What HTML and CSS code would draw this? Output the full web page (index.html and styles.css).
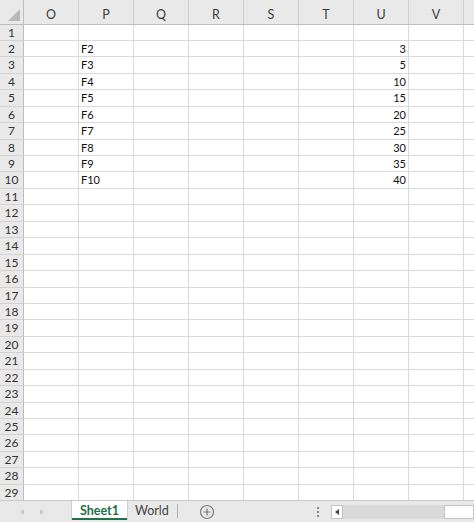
FILE: index.html
```html
<!DOCTYPE html>
<html>
<head>
<meta charset="utf-8">
<link rel="stylesheet" href="styles.css">
</head>
<body>
<div class="app">
  <div class="grid">
    <div class="row head">
      <div class="corner"><span class="tri"></span></div>
      <div class="ch">O</div><div class="ch">P</div><div class="ch">Q</div><div class="ch">R</div><div class="ch">S</div><div class="ch">T</div><div class="ch">U</div><div class="ch">V</div><div class="ch"></div>
    </div>
    <div class="row"><div class="rh">1</div><div class="c"></div><div class="c"></div><div class="c"></div><div class="c"></div><div class="c"></div><div class="c"></div><div class="c"></div><div class="c"></div><div class="c"></div></div>
    <div class="row"><div class="rh">2</div><div class="c"></div><div class="c">F2</div><div class="c"></div><div class="c"></div><div class="c"></div><div class="c"></div><div class="c n">3</div><div class="c"></div><div class="c"></div></div>
    <div class="row"><div class="rh">3</div><div class="c"></div><div class="c">F3</div><div class="c"></div><div class="c"></div><div class="c"></div><div class="c"></div><div class="c n">5</div><div class="c"></div><div class="c"></div></div>
    <div class="row"><div class="rh">4</div><div class="c"></div><div class="c">F4</div><div class="c"></div><div class="c"></div><div class="c"></div><div class="c"></div><div class="c n">10</div><div class="c"></div><div class="c"></div></div>
    <div class="row"><div class="rh">5</div><div class="c"></div><div class="c">F5</div><div class="c"></div><div class="c"></div><div class="c"></div><div class="c"></div><div class="c n">15</div><div class="c"></div><div class="c"></div></div>
    <div class="row"><div class="rh">6</div><div class="c"></div><div class="c">F6</div><div class="c"></div><div class="c"></div><div class="c"></div><div class="c"></div><div class="c n">20</div><div class="c"></div><div class="c"></div></div>
    <div class="row"><div class="rh">7</div><div class="c"></div><div class="c">F7</div><div class="c"></div><div class="c"></div><div class="c"></div><div class="c"></div><div class="c n">25</div><div class="c"></div><div class="c"></div></div>
    <div class="row"><div class="rh">8</div><div class="c"></div><div class="c">F8</div><div class="c"></div><div class="c"></div><div class="c"></div><div class="c"></div><div class="c n">30</div><div class="c"></div><div class="c"></div></div>
    <div class="row"><div class="rh">9</div><div class="c"></div><div class="c">F9</div><div class="c"></div><div class="c"></div><div class="c"></div><div class="c"></div><div class="c n">35</div><div class="c"></div><div class="c"></div></div>
    <div class="row"><div class="rh">10</div><div class="c"></div><div class="c">F10</div><div class="c"></div><div class="c"></div><div class="c"></div><div class="c"></div><div class="c n">40</div><div class="c"></div><div class="c"></div></div>
    <div class="row"><div class="rh">11</div><div class="c"></div><div class="c"></div><div class="c"></div><div class="c"></div><div class="c"></div><div class="c"></div><div class="c"></div><div class="c"></div><div class="c"></div></div>
    <div class="row"><div class="rh">12</div><div class="c"></div><div class="c"></div><div class="c"></div><div class="c"></div><div class="c"></div><div class="c"></div><div class="c"></div><div class="c"></div><div class="c"></div></div>
    <div class="row"><div class="rh">13</div><div class="c"></div><div class="c"></div><div class="c"></div><div class="c"></div><div class="c"></div><div class="c"></div><div class="c"></div><div class="c"></div><div class="c"></div></div>
    <div class="row"><div class="rh">14</div><div class="c"></div><div class="c"></div><div class="c"></div><div class="c"></div><div class="c"></div><div class="c"></div><div class="c"></div><div class="c"></div><div class="c"></div></div>
    <div class="row"><div class="rh">15</div><div class="c"></div><div class="c"></div><div class="c"></div><div class="c"></div><div class="c"></div><div class="c"></div><div class="c"></div><div class="c"></div><div class="c"></div></div>
    <div class="row"><div class="rh">16</div><div class="c"></div><div class="c"></div><div class="c"></div><div class="c"></div><div class="c"></div><div class="c"></div><div class="c"></div><div class="c"></div><div class="c"></div></div>
    <div class="row"><div class="rh">17</div><div class="c"></div><div class="c"></div><div class="c"></div><div class="c"></div><div class="c"></div><div class="c"></div><div class="c"></div><div class="c"></div><div class="c"></div></div>
    <div class="row"><div class="rh">18</div><div class="c"></div><div class="c"></div><div class="c"></div><div class="c"></div><div class="c"></div><div class="c"></div><div class="c"></div><div class="c"></div><div class="c"></div></div>
    <div class="row"><div class="rh">19</div><div class="c"></div><div class="c"></div><div class="c"></div><div class="c"></div><div class="c"></div><div class="c"></div><div class="c"></div><div class="c"></div><div class="c"></div></div>
    <div class="row"><div class="rh">20</div><div class="c"></div><div class="c"></div><div class="c"></div><div class="c"></div><div class="c"></div><div class="c"></div><div class="c"></div><div class="c"></div><div class="c"></div></div>
    <div class="row"><div class="rh">21</div><div class="c"></div><div class="c"></div><div class="c"></div><div class="c"></div><div class="c"></div><div class="c"></div><div class="c"></div><div class="c"></div><div class="c"></div></div>
    <div class="row"><div class="rh">22</div><div class="c"></div><div class="c"></div><div class="c"></div><div class="c"></div><div class="c"></div><div class="c"></div><div class="c"></div><div class="c"></div><div class="c"></div></div>
    <div class="row"><div class="rh">23</div><div class="c"></div><div class="c"></div><div class="c"></div><div class="c"></div><div class="c"></div><div class="c"></div><div class="c"></div><div class="c"></div><div class="c"></div></div>
    <div class="row"><div class="rh">24</div><div class="c"></div><div class="c"></div><div class="c"></div><div class="c"></div><div class="c"></div><div class="c"></div><div class="c"></div><div class="c"></div><div class="c"></div></div>
    <div class="row"><div class="rh">25</div><div class="c"></div><div class="c"></div><div class="c"></div><div class="c"></div><div class="c"></div><div class="c"></div><div class="c"></div><div class="c"></div><div class="c"></div></div>
    <div class="row"><div class="rh">26</div><div class="c"></div><div class="c"></div><div class="c"></div><div class="c"></div><div class="c"></div><div class="c"></div><div class="c"></div><div class="c"></div><div class="c"></div></div>
    <div class="row"><div class="rh">27</div><div class="c"></div><div class="c"></div><div class="c"></div><div class="c"></div><div class="c"></div><div class="c"></div><div class="c"></div><div class="c"></div><div class="c"></div></div>
    <div class="row"><div class="rh">28</div><div class="c"></div><div class="c"></div><div class="c"></div><div class="c"></div><div class="c"></div><div class="c"></div><div class="c"></div><div class="c"></div><div class="c"></div></div>
    <div class="row"><div class="rh">29</div><div class="c"></div><div class="c"></div><div class="c"></div><div class="c"></div><div class="c"></div><div class="c"></div><div class="c"></div><div class="c"></div><div class="c"></div></div>
  </div>
  <div class="tabbar">
    <div class="nav">
      <svg class="navsvg" width="60" height="22" viewBox="0 0 60 22"><path d="M24 8 L20 11 L24 14 Z" fill="#c8c8c8"/><path d="M40 8 L44 11 L40 14 Z" fill="#c8c8c8"/></svg>
    </div>
    <div class="tabs">
      <div class="tab active">Sheet1</div>
      <div class="tab">World</div>
      <div class="tabsep"></div>
    </div>
    <div class="add">
      <svg width="16" height="16" viewBox="0 0 16 16"><circle cx="8" cy="8" r="6.5" fill="none" stroke="#7a7a7a" stroke-width="1.2"/><path d="M8 4.5 V11.5 M4.5 8 H11.5" stroke="#7a7a7a" stroke-width="1.2"/></svg>
    </div>
    <div class="spacer"></div>
    <div class="dots"><span></span><span></span><span></span></div>
    <div class="hscroll">
      <div class="sbtn"><svg width="6" height="8" viewBox="0 0 6 8"><path d="M5 1 L1 4 L5 7 Z" fill="#444"/></svg></div>
      <div class="track"></div>
      <div class="thumb"></div>
    </div>
  </div>
</div>
</body>
</html>
```
FILE: styles.css
```css
html, body {
  margin: 0;
  padding: 0;
  background: #ffffff;
}
.app {
  width: 474px;
  height: 522px;
  overflow: hidden;
  display: flex;
  flex-direction: column;
  font-family: Lato, "Open Sans", sans-serif;
}
.grid {
  height: 500px;
  overflow: hidden;
  flex: none;
}
.row {
  display: grid;
  grid-template-columns: 24px repeat(9, 55px);
  height: 16.45px;
}
.row.head {
  height: 24.5px;
}
.corner, .ch, .rh, .c {
  box-sizing: border-box;
  overflow: hidden;
  white-space: nowrap;
}
.corner {
  background: #e9e9e9;
  border-right: 1px solid #bdbdbd;
  border-bottom: 1px solid #bdbdbd;
  position: relative;
}
.tri {
  position: absolute;
  right: 3px;
  bottom: 3px;
  width: 0;
  height: 0;
  border-left: 12px solid transparent;
  border-bottom: 12px solid #b8b8b8;
}
.ch {
  background: #e9e9e9;
  border-right: 1px solid #cfcfcf;
  border-bottom: 1px solid #bdbdbd;
  text-align: center;
  font-size: 12.5px;
  line-height: 24px;
  padding-top: 3px;
  color: #3c3c3c;
}
.rh {
  background: #e9e9e9;
  border-right: 1px solid #bdbdbd;
  border-bottom: 1px solid #d2d2d2;
  text-align: center;
  font-size: 12px;
  line-height: 16px;
  color: #333;
}
.c {
  border-right: 1px solid #dadada;
  border-bottom: 1px solid #dadada;
  font-size: 11px;
  line-height: 16px;
  padding: 0 2px;
  color: #111;
}
.c.n {
  text-align: right;
}
.tabbar {
  flex: none;
  height: 22px;
  box-sizing: border-box;
  border-top: 1px solid #c8c8c8;
  background: #e9e9e9;
  display: flex;
  align-items: stretch;
}
.nav {
  width: 60px;
  flex: none;
}
.navsvg {
  display: block;
}
.tabs {
  display: flex;
  align-items: stretch;
  margin-left: 12px;
}
.tab {
  box-sizing: border-box;
  padding: 0 8px;
  font-size: 12.5px;
  line-height: 19px;
  color: #444;
}
.tab.active {
  background: #ffffff;
  color: #217346;
  font-weight: bold;
  width: 55px;
  text-align: center;
  border-bottom: 2px solid #217346;
  margin-bottom: 2px;
  box-shadow: 1px 0 0 #d0d0d0, -1px 0 0 #d0d0d0;
}
.tabsep {
  width: 1px;
  background: #b0b0b0;
  margin: 3px 0 4px 0;
}
.add {
  margin-left: 21px;
  display: flex;
  align-items: center;
}
.add svg {
  display: block;
}
.spacer {
  flex: 1;
}
.dots {
  width: 3px;
  display: flex;
  flex-direction: column;
  justify-content: center;
  gap: 2px;
  margin-right: 11px;
}
.dots span {
  width: 2px;
  height: 2px;
  background: #8a8a8a;
}
.hscroll {
  display: flex;
  align-items: center;
  width: 143px;
}
.sbtn {
  box-sizing: border-box;
  width: 12px;
  height: 14px;
  background: #fff;
  border: 1px solid #c3c3c3;
  display: flex;
  align-items: center;
  justify-content: center;
}
.track {
  flex: 1;
  height: 14px;
  background: #d9d9d9;
}
.thumb {
  box-sizing: border-box;
  width: 30px;
  height: 14px;
  background: #fff;
  border: 1px solid #c3c3c3;
}
```
